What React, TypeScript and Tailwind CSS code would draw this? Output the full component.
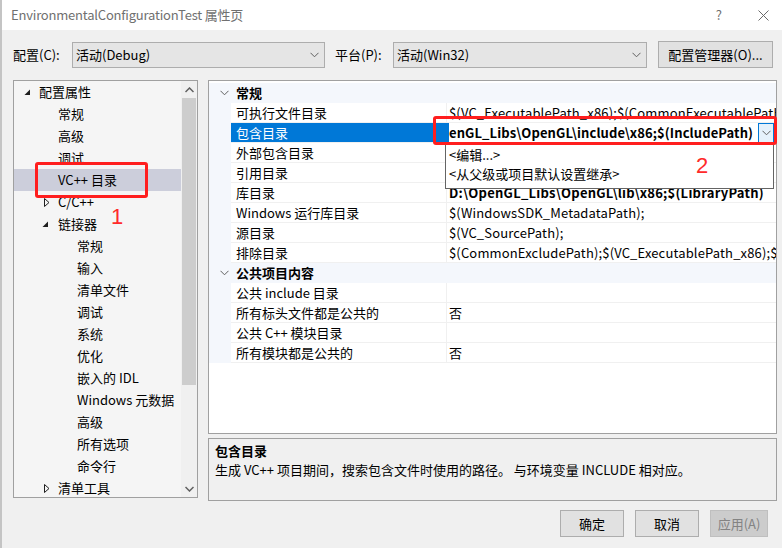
import React from "react";

const Chev = ({ className = "" }: { className?: string }) => (
  <svg width="9" height="6" viewBox="0 0 9 6" className={className}>
    <polyline points="0.5,0.8 4.5,4.8 8.5,0.8" fill="none" stroke="#606060" strokeWidth="1" />
  </svg>
);

const TriDown = () => (
  <svg width="7" height="7" viewBox="0 0 7 7">
    <polygon points="6,0.5 6,6 0.5,6" fill="#1e1e1e" />
  </svg>
);

const TriRight = () => (
  <svg width="6" height="9" viewBox="0 0 6 9">
    <polygon points="0.5,0.5 5,4.5 0.5,8.5" fill="none" stroke="#1e1e1e" strokeWidth="1" />
  </svg>
);

type TreeItem = { label: string; indent: string; tri?: "down" | "right"; triPad?: string; sel?: boolean };

const tree: TreeItem[] = [
  { label: "配置属性", indent: "w-[25px]", tri: "down", triPad: "pl-[10px]" },
  { label: "常规", indent: "w-[44px]" },
  { label: "高级", indent: "w-[44px]" },
  { label: "调试", indent: "w-[44px]" },
  { label: "VC++ 目录", indent: "w-[44px]", sel: true },
  { label: "C/C++", indent: "w-[44px]", tri: "right", triPad: "pl-[30px]" },
  { label: "链接器", indent: "w-[44px]", tri: "down", triPad: "pl-[28px]" },
  { label: "常规", indent: "w-[63px]" },
  { label: "输入", indent: "w-[63px]" },
  { label: "清单文件", indent: "w-[63px]" },
  { label: "调试", indent: "w-[63px]" },
  { label: "系统", indent: "w-[63px]" },
  { label: "优化", indent: "w-[63px]" },
  { label: "嵌入的 IDL", indent: "w-[63px]" },
  { label: "Windows 元数据", indent: "w-[63px]" },
  { label: "高级", indent: "w-[63px]" },
  { label: "所有选项", indent: "w-[63px]" },
  { label: "命令行", indent: "w-[63px]" },
  { label: "清单工具", indent: "w-[44px]", tri: "right", triPad: "pl-[30px]" },
];

type Row =
  | { kind: "cat"; label: string }
  | { kind: "prop"; label: string; value: string; bold?: boolean; edit?: boolean };

const rows: Row[] = [
  { kind: "cat", label: "常规" },
  { kind: "prop", label: "可执行文件目录", value: "$(VC_ExecutablePath_x86);$(CommonExecutablePath)" },
  { kind: "prop", label: "包含目录", value: "enGL_Libs\\OpenGL\\include\\x86;$(IncludePath)", bold: true, edit: true },
  { kind: "prop", label: "外部包含目录", value: "" },
  { kind: "prop", label: "引用目录", value: "" },
  { kind: "prop", label: "库目录", value: "D:\\OpenGL_Libs\\OpenGL\\lib\\x86;$(LibraryPath)", bold: true },
  { kind: "prop", label: "Windows 运行库目录", value: "$(WindowsSDK_MetadataPath);" },
  { kind: "prop", label: "源目录", value: "$(VC_SourcePath);" },
  { kind: "prop", label: "排除目录", value: "$(CommonExcludePath);$(VC_ExecutablePath_x86);$" },
  { kind: "cat", label: "公共项目内容" },
  { kind: "prop", label: "公共 include 目录", value: "" },
  { kind: "prop", label: "所有标头文件都是公共的", value: "否" },
  { kind: "prop", label: "公共 C++ 模块目录", value: "" },
  { kind: "prop", label: "所有模块都是公共的", value: "否" },
];

export default function App() {
  return (
    <div className="w-[782px] h-[548px] bg-[#f0f0f0] flex flex-col overflow-hidden border-l-2 border-[#c4c4c4] text-[13px] text-black font-['Noto_Sans_CJK_SC','Noto_Sans',sans-serif]">
      {/* title bar */}
      <div className="h-[30px] bg-white flex items-center justify-between pl-[9px] pr-[13px] shrink-0">
        <span className="text-[#707070] text-[13px] tracking-[-0.2px]">EnvironmentalConfigurationTest 属性页</span>
        <div className="flex items-center gap-[36px] text-[#707070]">
          <span className="text-[13px]">?</span>
          <svg width="11" height="11" viewBox="0 0 11 11">
            <path d="M0.5 0.5 L10.5 10.5 M10.5 0.5 L0.5 10.5" stroke="#6a6a6a" strokeWidth="1" />
          </svg>
        </div>
      </div>

      {/* toolbar */}
      <div className="mt-[11px] h-[27px] flex items-center pl-[11px] shrink-0">
        <span className="w-[59px]">配置(C):</span>
        <div className="w-[253px] h-[26px] border border-[#adadad] bg-[#e5e5e5] flex items-center justify-between pl-[3px] pr-[5px]">
          <span>活动(Debug)</span>
          <Chev />
        </div>
        <span className="ml-[10px] w-[58px]">平台(P):</span>
        <div className="w-[254px] h-[26px] border border-[#adadad] bg-[#e5e5e5] flex items-center justify-between pl-[3px] pr-[5px]">
          <span>活动(Win32)</span>
          <Chev />
        </div>
        <div className="ml-[11px] w-[115px] h-[27px] border border-[#adadad] bg-[#e1e1e1] flex items-center justify-center">
          配置管理器(O)...
        </div>
      </div>

      {/* main */}
      <div className="mt-[12px] h-[421px] flex pl-[11px] shrink-0">
        {/* tree */}
        <div className="relative w-[185px] h-[418px] border border-[#a0a0a0] bg-[#f5f5f5] flex">
          <div className="flex-1 flex flex-col">
            {tree.map((t, i) => (
              <div key={i} className={`h-[22px] flex items-center ${t.sel ? "bg-[#cccedb]" : ""}`}>
                <div className={`${t.indent} shrink-0 flex items-center ${t.triPad ?? ""}`}>
                  {t.tri === "down" ? <TriDown /> : t.tri === "right" ? <TriRight /> : null}
                </div>
                <span className="leading-[22px] whitespace-nowrap">{t.label}</span>
              </div>
            ))}
          </div>
          <div className="w-[16px] flex flex-col bg-[#f0f0f0]">
            <div className="h-[17px] flex items-center justify-center">
              <svg width="9" height="6" viewBox="0 0 9 6">
                <polyline points="0.5,5 4.5,1 8.5,5" fill="none" stroke="#606060" strokeWidth="1.5" />
              </svg>
            </div>
            <div className="mx-[1px] h-[287px] bg-[#cdcdcd]" />
            <div className="flex-1" />
            <div className="h-[17px] flex items-center justify-center">
              <svg width="9" height="6" viewBox="0 0 9 6">
                <polyline points="0.5,1 4.5,5 8.5,1" fill="none" stroke="#606060" strokeWidth="1.5" />
              </svg>
            </div>
          </div>
          {/* annotation 1 */}
          <div className="absolute left-[21px] top-[81px] w-[113px] h-[36px] border-[3px] border-[#ff1e1e] rounded-[3px]" />
          <div className="absolute left-[97px] top-[125px] text-[22px] leading-[22px] text-[#ff2a2a] font-['Liberation_Sans',sans-serif]">1</div>
        </div>

        {/* right column */}
        <div className="ml-[10px] w-[569px] flex flex-col">
          <div className="relative h-[354px] border border-[#a0a0a0] bg-white pt-[2px]">
            <div className="flex flex-col bg-[#f4f7fc]">
              {rows.map((r, i) =>
                r.kind === "cat" ? (
                  <div key={i} className="h-[20px] flex items-center bg-[#f4f7fc]">
                    <div className="w-[27px] shrink-0 flex items-center justify-center pl-[4px]">
                      <Chev />
                    </div>
                    <span className="font-bold leading-[20px]">{r.label}</span>
                  </div>
                ) : (
                  <div key={i} className="h-[20px] flex">
                    <div className="w-[22px] shrink-0 bg-[#f4f7fc]" />
                    <div
                      className={`w-[215px] shrink-0 pl-[5px] flex items-center border-b border-[#f0f0f0] ${
                        r.edit ? "bg-[#0078d7] text-white border-[#0078d7]" : "bg-white"
                      }`}
                    >
                      <span className="leading-[19px] whitespace-nowrap">{r.label}</span>
                    </div>
                    {r.edit ? (
                      <div className="flex-1 min-w-0 flex bg-white">
                        <div className="w-[3px] bg-[#0078d7]" />
                        <div className="flex-1 min-w-0 flex items-center overflow-hidden">
                          <span className="font-bold whitespace-nowrap leading-[20px] tracking-[0.1px]">{r.value}</span>
                        </div>
                        <div className="w-[16px] h-[20px] border border-[#0078d7] bg-[#e5f1fb] flex items-center justify-center">
                          <Chev />
                        </div>
                        <div className="w-[2px]" />
                      </div>
                    ) : (
                      <div className="flex-1 min-w-0 bg-white border-l border-[#f0f0f0] border-b pl-[2px] flex items-center overflow-hidden">
                        <span className={`whitespace-nowrap leading-[19px] ${r.bold ? "font-bold tracking-[0.25px]" : "tracking-[0.15px]"}`}>{r.value}</span>
                      </div>
                    )}
                  </div>
                )
              )}
            </div>
            {/* dropdown list */}
            <div className="absolute left-[236px] top-[62px] w-[329px] h-[46px] border border-[#646464] bg-white flex flex-col pt-[1px]">
              <div className="h-[19px] pl-[3px] flex items-center leading-[19px]">&lt;编辑...&gt;</div>
              <div className="h-[19px] pl-[3px] flex items-center leading-[19px]">&lt;从父级或项目默认设置继承&gt;</div>
            </div>
            {/* annotation 2 */}
            <div className="absolute left-[224px] top-[35px] w-[344px] h-[29px] border-[3px] border-[#ff1e1e] rounded-[3px]" />
            <div className="absolute left-[487px] top-[74px] text-[22px] leading-[22px] text-[#ff2a2a] font-['Liberation_Sans',sans-serif]">2</div>
          </div>

          {/* description */}
          <div className="mt-[4px] h-[63px] border border-[#a0a0a0] bg-[#f0f0f0] pl-[6px] pt-[2px] flex flex-col">
            <span className="font-bold leading-[19px]">包含目录</span>
            <span className="leading-[19px]">生成 VC++ 项目期间，搜索包含文件时使用的路径。 与环境变量 INCLUDE 相对应。</span>
          </div>
        </div>
      </div>

      {/* buttons */}
      <div className="mt-[9px] h-[27px] flex justify-end gap-[11px] pr-[14px] shrink-0">
        <div className="w-[64px] h-[27px] border border-[#adadad] bg-[#e1e1e1] flex items-center justify-center">确定</div>
        <div className="w-[64px] h-[27px] border border-[#adadad] bg-[#e1e1e1] flex items-center justify-center">取消</div>
        <div className="w-[58px] h-[27px] border border-[#bfbfbf] bg-[#cccccc] text-[#838383] flex items-center justify-center">应用(A)</div>
      </div>
    </div>
  );
}
